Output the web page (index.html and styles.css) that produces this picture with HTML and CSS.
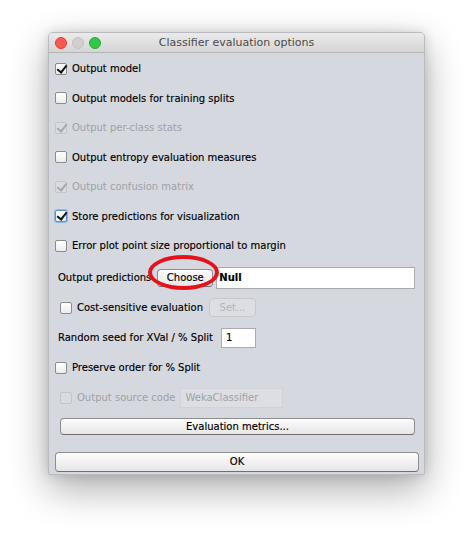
FILE: index.html
```html
<!DOCTYPE html>
<html lang="en">
<head>
    <meta charset="UTF-8">
    <title>Classifier evaluation options</title>
    <link rel="stylesheet" href="styles.css">
</head>
<body>
    <div class="window">
        <div class="titlebar">
            <div class="lights">
                <span class="light red"></span>
                <span class="light grey"></span>
                <span class="light green"></span>
            </div>
            <div class="title">Classifier evaluation options</div>
        </div>

        <div class="content">
            <label class="row"><span class="box checked"></span>Output model</label>
            <label class="row"><span class="box"></span>Output models for training splits</label>
            <label class="row disabled"><span class="box checked"></span>Output per-class stats</label>
            <label class="row"><span class="box"></span>Output entropy evaluation measures</label>
            <label class="row disabled"><span class="box checked"></span>Output confusion matrix</label>
            <label class="row"><span class="box checked focus"></span>Store predictions for visualization</label>
            <label class="row"><span class="box"></span>Error plot point size proportional to margin</label>

            <div class="row wide predictions">
                <span class="text">Output predictions</span>
                <button class="btn choose">Choose</button>
                <div class="field grow">Null</div>
                <!-- annotation drawn over the screenshot -->
                <span class="circle"></span>
            </div>

            <div class="row wide indent">
                <span class="box"></span>Cost-sensitive evaluation
                <button class="btn set" disabled>Set...</button>
            </div>

            <div class="row wide seed">
                <span class="text">Random seed for XVal / % Split</span>
                <div class="field small">1</div>
            </div>

            <label class="row wide"><span class="box"></span>Preserve order for % Split</label>

            <div class="row wide indent disabled">
                <span class="box"></span>Output source code
                <div class="field code">WekaClassifier</div>
            </div>

            <div class="metrics-row">
                <button class="btn metrics">Evaluation metrics...</button>
            </div>
            <div class="ok-row">
                <button class="btn ok">OK</button>
            </div>
        </div>
    </div>
</body>
</html>
```

FILE: styles.css
```css
body {
    margin: 0;
    padding: 32px 0 0 48px;
    height: 540px;
    box-sizing: border-box;
    overflow: hidden;
    background: #fff;
    font-family: "DejaVu Sans", sans-serif;
    font-size: 10px;
    color: #000;
    -webkit-text-stroke: 0.15px #000;
}
.window {
    width: 377px;
    height: 443px;
    background: #d6d8df;
    border: 1px solid #b9bbbf;
    border-radius: 5px 5px 2px 2px;
    box-sizing: border-box;
    box-shadow: 0 14px 38px rgba(0,0,0,0.33), 0 0 12px rgba(0,0,0,0.14);
    overflow: hidden;
}
.titlebar {
    height: 19px;
    display: flex;
    align-items: center;
    background: linear-gradient(#ebebeb, #d5d5d5);
    border-bottom: 1px solid #b4b4b4;
}
.lights {
    display: flex;
    gap: 5px;
    padding-left: 6px;
    width: 46px;
}
.light {
    width: 12px;
    height: 12px;
    border-radius: 50%;
    box-sizing: border-box;
}
.light.red { background: #fc5753; border: 1px solid #df3d38; }
.light.grey { background: #d0d0d0; border: 1px solid #c2c2c2; }
.light.green { background: #33c748; border: 1px solid #27aa35; }
.title {
    flex: 1;
    text-align: center;
    color: #4a4a4a;
    -webkit-text-stroke: 0;
    font-size: 11px;
    padding-right: 52px;
}
.content {
    padding: 1px 6px 0;
}
.row {
    height: 29.5px;
    display: flex;
    align-items: center;
    gap: 5px;
}
.row.wide {
    height: 30px;
}
.row.disabled {
    color: #9fa1a7;
    -webkit-text-stroke: 0;
}
.indent {
    padding-left: 5px;
}
.text {
    padding-left: 3px;
}
.box {
    width: 12px;
    height: 12px;
    box-sizing: border-box;
    border: 1px solid #8c8c8c;
    border-radius: 2px;
    background: linear-gradient(#ffffff, #ececec);
    position: relative;
    flex: none;
}
.box.checked::after {
    content: "";
    position: absolute;
    left: 3px;
    top: -1px;
    width: 4px;
    height: 8px;
    border: solid #111;
    border-width: 0 2px 2px 0;
    transform: rotate(38deg);
}
.box.focus {
    border-color: #5b8fd6;
    box-shadow: 0 0 0 1px #8fb5e8;
}
.disabled .box {
    border-color: #c3c5ca;
    background: #d9dbe0;
}
.disabled .box.checked::after {
    border-color: #a6a8ad;
}
.btn {
    font-family: inherit;
    font-size: 10px;
    color: #000;
    background: linear-gradient(#fdfdfd, #e6e6e6);
    border: 1px solid #8e8e8e;
    border-bottom-color: #6f6f6f;
    border-radius: 4px;
    padding: 0;
}
.field {
    background: #fff;
    border: 1px solid #a9abaf;
    box-sizing: border-box;
    display: flex;
    align-items: center;
    padding-left: 4px;
}
.predictions {
    position: relative;
    gap: 0;
    margin-top: 2px;
}
.choose {
    width: 56px;
    height: 18px;
    margin-left: 6px;
}
.field.grow {
    width: 199px;
    height: 22px;
    margin-left: 3px;
    padding-left: 2px;
    font-weight: bold;
}
.circle {
    position: absolute;
    left: 93px;
    top: -8px;
    width: 63px;
    height: 27px;
    border: 4.5px solid #e5121c;
    border-radius: 50%;
}
.set {
    width: 47px;
    height: 19px;
    margin-left: 1px;
    color: #b3b5ba;
    -webkit-text-stroke: 0;
    border-color: #c6c8cc;
    background: #dcdee3;
}
.field.small {
    width: 35px;
    height: 20px;
    margin-left: 3px;
}
.field.code {
    width: 103px;
    height: 20px;
    margin-left: 0;
    background: #dcdee3;
    border-color: #d0d2d7;
    color: #9fa1a7;
}
.metrics-row {
    height: 17px;
    margin: 5px 3px 0 5px;
    display: flex;
}
.metrics {
    flex: 1;
}
.ok-row {
    height: 20px;
    margin: 17px -1px 0 0;
    display: flex;
}
.ok {
    flex: 1;
}
```
